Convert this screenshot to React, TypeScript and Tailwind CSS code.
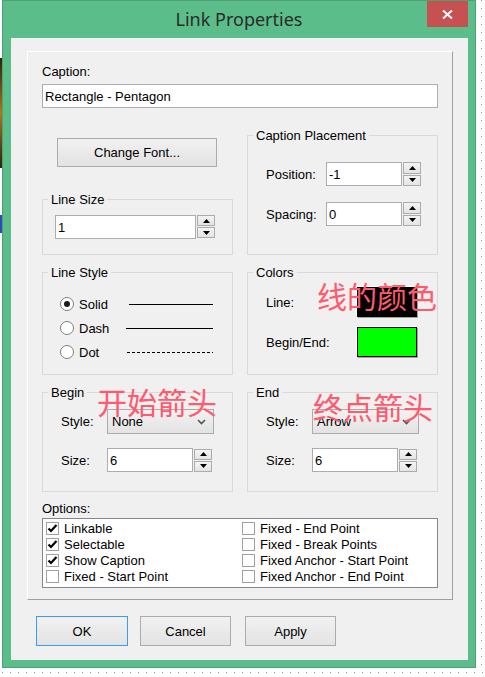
import React from 'react';

const Spin = ({ h = 'h-[23px]' }: { h?: string }) => (
  <div className={`ml-[1px] flex w-[18px] flex-col gap-[1px] ${h}`}>
    <div className="flex flex-1 items-center justify-center border border-[#acacac] bg-gradient-to-b from-[#f4f4f4] to-[#e4e4e4]">
      <svg width="7" height="4" viewBox="0 0 7 4">
        <path d="M3.5 0L7 4H0z" fill="#000" />
      </svg>
    </div>
    <div className="flex flex-1 items-center justify-center border border-[#acacac] bg-gradient-to-b from-[#f4f4f4] to-[#e4e4e4]">
      <svg width="7" height="4" viewBox="0 0 7 4">
        <path d="M0 0H7L3.5 4z" fill="#000" />
      </svg>
    </div>
  </div>
);

const Field = ({ value, w }: { value: string; w: string }) => (
  <div className={`flex h-[24px] items-center border border-[#abadb3] bg-white px-[2px] ${w}`}>{value}</div>
);

// group box: the title sits in a gap of the top border
const Group = ({
  title,
  outer = '',
  className = '',
  children,
}: {
  title: string;
  outer?: string;
  className?: string;
  children: React.ReactNode;
}) => (
  <div className={`flex flex-col ${outer}`}>
    <div className="flex h-[15px]">
      <div className="mt-[7px] w-[6px] border-l border-t border-[#d9d9d9]" />
      <span className="px-[3px]">{title}</span>
      <div className="mt-[7px] flex-1 border-r border-t border-[#d9d9d9]" />
    </div>
    <div className={`flex-1 border-x border-b border-[#d9d9d9] ${className}`}>{children}</div>
  </div>
);

const Btn = ({ label, w, focus = false }: { label: string; w: string; focus?: boolean }) => (
  <div
    className={`flex h-[30px] items-center justify-center border bg-gradient-to-b from-[#f1f1f1] to-[#e3e3e3] ${w} ${
      focus ? 'border-[#3c9cf0]' : 'border-[#acacac]'
    }`}
  >
    {label}
  </div>
);

const Check = ({ label, checked = false }: { label: string; checked?: boolean }) => (
  <div className="flex h-[16px] items-center pl-[3px]">
    <div className="flex h-[13px] w-[13px] items-center justify-center border border-[#a0a0a0] bg-white">
      {checked && (
        <svg width="11" height="11" viewBox="0 0 11 11">
          <path d="M1.5 5.5L4 8L9.5 2" fill="none" stroke="#000" strokeWidth="2.2" />
        </svg>
      )}
    </div>
    <span className="ml-[5px]">{label}</span>
  </div>
);

const Radio = ({ label, on = false }: { label: string; on?: boolean }) => (
  <div className="flex items-center">
    <div className="flex h-[14px] w-[14px] items-center justify-center rounded-full border border-[#7f7f7f] bg-white">
      {on && <div className="h-[6px] w-[6px] rounded-full bg-[#1a1a1a]" />}
    </div>
    <span className="ml-[5px]">{label}</span>
  </div>
);

const Select = ({ value }: { value: string }) => (
  <div className="flex h-[25px] w-[107px] items-center justify-between border border-[#acacac] bg-gradient-to-b from-[#f2f2f2] to-[#e3e3e3] pl-[4px] pr-[7px]">
    <span>{value}</span>
    <svg width="9" height="6" viewBox="0 0 9 6">
      <path d="M1 1L4.5 4.5L8 1" fill="none" stroke="#555" strokeWidth="1.6" />
    </svg>
  </div>
);

const Swatch = ({ color }: { color: string }) => (
  <div className={`h-[30px] w-[60px] border border-black shadow-[1px_1px_0_#a0a0a0,-1px_-1px_0_#ffffff] ${color}`} />
);

export default function App() {
  return (
    <div className="relative flex h-[677px] w-[485px] overflow-hidden bg-white font-['Liberation_Sans',Arial,sans-serif] text-[13px] leading-[15px] text-black">
      {/* bit of desktop at the left edge */}
      <div className="w-[2px] shrink-0">
        <div className="mt-[58px] h-[110px] bg-gradient-to-b from-[#2b2410] via-[#b47419] to-[#2a2412]" />
        <div className="mt-[47px] h-[18px] bg-[#2c49b8]" />
      </div>

      <div className="flex flex-col">
        <div className="flex">
          {/* window */}
          <div className="flex h-[668px] w-[474px] shrink-0 flex-col border border-[#4f9f77] bg-[#5bbd8a]">
            <div className="flex h-[37px]">
              <div className="ml-[7px] w-[41px]" />
              <div className="flex flex-1 items-center justify-center pb-[1px] font-['Noto_Sans',sans-serif] text-[18px] text-[#2b2b2b]">
                Link Properties
              </div>
              <div className="mr-[7px] flex h-[26px] w-[41px] items-center justify-center bg-[#c75050]">
                <svg width="11" height="9" viewBox="0 0 11 9">
                  <path d="M1 0.5L10 8.5M10 0.5L1 8.5" stroke="#fff" strokeWidth="2" />
                </svg>
              </div>
            </div>

            <div className="ml-[8px] flex h-[622px] w-[457px] flex-col bg-[#f0f0f0]">
              {/* property page */}
              <div className="ml-[16px] mt-[13px] w-[426px] border border-b-[#a0a0a0] border-l-white border-r-[#a0a0a0] border-t-white px-[14px] pb-[11px] pt-[12px]">
                <div>Caption:</div>
                <Field value="Rectangle - Pentagon" w="mt-[5px] w-full" />

                <div className="mt-[20px] grid grid-cols-[191px_191px] gap-x-[14px]">
                  <div className="flex flex-col">
                    <div className="ml-[15px] mt-[10px] flex h-[29px] w-[160px] items-center justify-center border border-[#acacac] bg-gradient-to-b from-[#f1f1f1] to-[#e3e3e3]">
                      Change Font...
                    </div>
                    <Group title="Line Size" outer="mt-[25px]" className="pb-[15px] pl-[12px] pt-[8px]">
                      <div className="flex">
                        <Field value="1" w="h-[23px] w-[141px]" />
                        <Spin />
                      </div>
                    </Group>
                  </div>

                  <Group title="Caption Placement" className="pb-[27px] pl-[18px] pt-[19px]">
                    <div className="flex items-center">
                      <span className="w-[60px]">Position:</span>
                      <Field value="-1" w="w-[76px]" />
                      <Spin h="h-[24px]" />
                    </div>
                    <div className="mt-[16px] flex items-center">
                      <span className="w-[60px]">Spacing:</span>
                      <Field value="0" w="w-[76px]" />
                      <Spin h="h-[24px]" />
                    </div>
                  </Group>
                </div>

                <div className="mt-[10px] grid grid-cols-[191px_191px] gap-x-[14px]">
                  <Group title="Line Style" className="pb-[10px] pl-[17px] pr-[19px] pt-[12px]">
                    <div className="flex h-[24px] items-center justify-between">
                      <Radio label="Solid" on />
                      <div className="h-[1px] w-[84px] bg-black" />
                    </div>
                    <div className="flex h-[24px] items-center justify-between">
                      <Radio label="Dash" />
                      <div className="h-[1px] w-[87px] bg-black" />
                    </div>
                    <div className="flex h-[24px] items-center justify-between">
                      <Radio label="Dot" />
                      <div className="h-[1px] w-[86px] bg-[repeating-linear-gradient(to_right,#000_0px,#000_3px,transparent_3px,transparent_5px)]" />
                    </div>
                  </Group>

                  <Group title="Colors" className="pl-[18px] pt-[7px]">
                    <div className="flex items-center">
                      <span className="w-[91px]">Line:</span>
                      <Swatch color="bg-black" />
                    </div>
                    <div className="mt-[10px] flex items-center">
                      <span className="w-[91px]">Begin/End:</span>
                      <Swatch color="bg-[#00ff00]" />
                    </div>
                  </Group>
                </div>

                <div className="mt-[10px] grid grid-cols-[191px_191px] gap-x-[14px]">
                  <Group title="Begin" className="pb-[19px] pl-[18px] pt-[9px]">
                    <div className="flex items-center">
                      <span className="w-[46px]">Style:</span>
                      <Select value="None" />
                    </div>
                    <div className="mt-[14px] flex items-center">
                      <span className="w-[46px]">Size:</span>
                      <Field value="6" w="w-[86px]" />
                      <Spin />
                    </div>
                  </Group>

                  <Group title="End" className="pb-[19px] pl-[18px] pt-[9px]">
                    <div className="flex items-center">
                      <span className="w-[46px]">Style:</span>
                      <Select value="Arrow" />
                    </div>
                    <div className="mt-[14px] flex items-center">
                      <span className="w-[46px]">Size:</span>
                      <Field value="6" w="w-[86px]" />
                      <Spin />
                    </div>
                  </Group>
                </div>

                <div className="mt-[9px]">Options:</div>
                <div className="mt-[2px] grid h-[70px] grid-cols-[196px_1fr] content-start border border-[#828790] bg-white pt-[1px]">
                  <Check label="Linkable" checked />
                  <Check label="Fixed - End Point" />
                  <Check label="Selectable" checked />
                  <Check label="Fixed - Break Points" />
                  <Check label="Show Caption" checked />
                  <Check label="Fixed Anchor - Start Point" />
                  <Check label="Fixed - Start Point" />
                  <Check label="Fixed Anchor - End Point" />
                </div>
              </div>

              <div className="ml-[25px] mt-[16px] flex">
                <Btn label="OK" w="w-[92px]" focus />
                <Btn label="Cancel" w="ml-[12px] w-[91px]" />
                <Btn label="Apply" w="ml-[14px] w-[91px]" />
              </div>
            </div>
          </div>

          <div className="h-[670px] w-[9px] shrink-0">
            <div className="ml-[5px] h-full w-[1px] bg-[repeating-linear-gradient(to_bottom,#9a9a9a_0px,#9a9a9a_1px,transparent_1px,transparent_8px)]" />
          </div>
        </div>
        <div className="mt-[2px] h-[1px] w-[483px] bg-[repeating-linear-gradient(to_right,#9a9a9a_0px,#9a9a9a_1px,transparent_1px,transparent_8px)]" />
      </div>

      {/* red annotations drawn over the dialog */}
      <span className="absolute left-[317px] top-[280px] font-['Noto_Sans_CJK_SC',sans-serif] text-[30px] leading-[30px] text-[#ff5a6e]">
        线的颜色
      </span>
      <span className="absolute left-[97px] top-[386px] font-['Noto_Sans_CJK_SC',sans-serif] text-[30px] leading-[30px] text-[#ff5a6e]">
        开始箭头
      </span>
      <span className="absolute left-[313px] top-[391px] font-['Noto_Sans_CJK_SC',sans-serif] text-[30px] leading-[30px] text-[#ff5a6e]">
        终点箭头
      </span>
    </div>
  );
}
